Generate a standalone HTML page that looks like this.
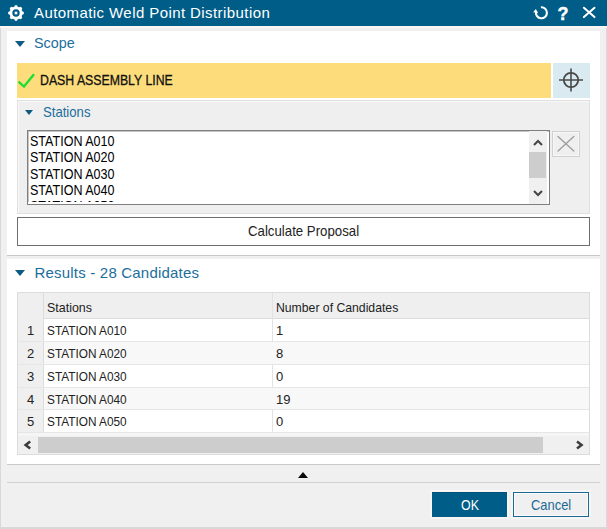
<!DOCTYPE html>
<html><head><meta charset="utf-8">
<style>
*{margin:0;padding:0;box-sizing:border-box}
html,body{width:607px;height:529px;overflow:hidden;background:#f0f0f0;font-family:"Liberation Sans",sans-serif;position:relative}
.a{position:absolute}
.t{position:absolute;white-space:nowrap;line-height:1;transform-origin:0 0}
.hdr{color:#1b6e9c}
.tri{width:0;height:0;border-left:6px solid transparent;border-right:6px solid transparent;border-top:6px solid #0e5a80}
.row{position:absolute;left:18px;width:571px;height:1px;background:#e6e6e6}
.idx{position:absolute;left:18px;width:25px;font-size:13px;color:#222;text-align:center;line-height:1}
.cell{position:absolute;left:47px;font-size:13px;color:#222;line-height:1;white-space:nowrap;transform:scaleX(0.909);transform-origin:0 0}
.num{position:absolute;left:276px;font-size:13px;color:#222;line-height:1;white-space:nowrap}
</style></head><body>
<div class="a" style="left:0;top:0;width:607px;height:26px;background:#005d88"></div>
<svg class="a" style="left:7px;top:3.8px" width="18" height="18" viewBox="0 0 18 18">
 <path fill="#fff" d="M7.32 2.72 L7.90 1.18 L10.10 1.18 L10.68 2.72 L12.25 3.37 L13.75 2.69 L15.31 4.25 L14.63 5.75 L15.28 7.32 L16.82 7.90 L16.82 10.10 L15.28 10.68 L14.63 12.25 L15.31 13.75 L13.75 15.31 L12.25 14.63 L10.68 15.28 L10.10 16.82 L7.90 16.82 L7.32 15.28 L5.75 14.63 L4.25 15.31 L2.69 13.75 L3.37 12.25 L2.72 10.68 L1.18 10.10 L1.18 7.90 L2.72 7.32 L3.37 5.75 L2.69 4.25 L4.25 2.69 L5.75 3.37 Z"/>
 <circle cx="9" cy="9" r="3.7" fill="#005d88"/>
 <rect x="7.7" y="7.7" width="2.6" height="2.6" fill="#fff"/>
</svg>
<div class="t" style="left:34px;top:5.0px;font-size:15px;color:#fff;letter-spacing:0.42px">Automatic Weld Point Distribution</div>
<!-- title icons -->
<svg class="a" style="left:528px;top:0" width="79" height="25" viewBox="0 0 79 25">
 <path d="M12.92 7.32 A5.5 5.5 0 1 1 8.1 11.4" fill="none" stroke="#fff" stroke-width="2.1"/>
 <path d="M5.2 12.3 L7.8 8.9 L10.2 12.9 Z" fill="#fff"/>
  <path d="M55.9 7.7 L66.5 17.1 M66.5 7.7 L55.9 17.1" stroke="#fff" stroke-width="2" stroke-linecap="round"/>
</svg>
<div class="t" style="left:557.5px;top:4.6px;font-size:18px;font-weight:bold;color:#fff;-webkit-text-stroke:0.4px #fff">?</div>

<div class="a" style="left:0;top:26px;width:1px;height:503px;background:#d8d8d8"></div>
<div class="a" style="left:606px;top:26px;width:1px;height:503px;background:#dadada"></div>
<div class="a" style="left:0;top:26px;width:607px;height:2px;background:#faf6f4"></div>

<!-- top panel -->
<div class="a" style="left:7px;top:31px;width:593px;height:224px;background:#fff"></div>
<div class="a" style="left:7px;top:255px;width:593px;height:1px;background:#c8c8c8"></div>
<div class="a tri" style="left:14.5px;top:41px;border-left-width:5.6px;border-right-width:5.6px"></div>
<div class="t hdr" style="left:34.4px;top:35.3px;font-size:15.5px;transform:scaleX(0.925)">Scope</div>

<div class="a" style="left:17px;top:63px;width:534px;height:35px;background:#fddc7b"></div>
<svg class="a" style="left:17px;top:72px" width="20" height="18" viewBox="0 0 20 18">
 <path d="M1.5 9.6 L7 14.6 L17 2.3" fill="none" stroke="#22dd33" stroke-width="2.4"/>
</svg>
<div class="t" style="left:39.6px;top:73.1px;font-size:14px;color:#111;transform:scaleX(0.878);-webkit-text-stroke:0.3px #111">DASH ASSEMBLY LINE</div>

<div class="a" style="left:553px;top:63px;width:37px;height:35px;background:#d9eaf0"></div>
<svg class="a" style="left:558px;top:67px" width="26" height="26" viewBox="0 0 26 26">
 <circle cx="13" cy="13" r="7.2" fill="none" stroke="#474747" stroke-width="1.8"/>
 <path d="M1 13 H25 M13 1.5 V24.5" stroke="#4a4a4a" stroke-width="1.6"/>
</svg>

<!-- stations panel -->
<div class="a" style="left:17px;top:100px;width:573px;height:114px;background:#efefef;border:1px solid #e0e0e0;box-shadow:inset 1px 1px 0 #f8f8f8"></div>
<div class="a tri" style="left:24.7px;top:110px;border-left-width:4.9px;border-right-width:4.9px;border-top-width:5px"></div>
<div class="t hdr" style="left:43px;top:104.5px;font-size:14.5px;transform:scaleX(0.906)">Stations</div>

<div class="a" style="left:27px;top:130px;width:523px;height:75px;background:#fff;border:1px solid #7f7f7f;box-shadow:inset 1px 1px 0 #c4c4c4;overflow:hidden">
 <div class="t" style="left:2.2px;top:1.7px;font-size:14px;color:#000;line-height:16.4px;transform:scaleX(0.895)">STATION A010<br>STATION A020<br>STATION A030<br>STATION A040<br>STATION A050</div>
 <div class="a" style="left:0;bottom:0;width:100%;height:1.6px;background:#fff"></div>
</div>
<!-- list scrollbar -->
<div class="a" style="left:529px;top:131px;width:18px;height:73px;background:#f0f0f0"></div>
<div class="a" style="left:529px;top:151.5px;width:17px;height:26px;background:#cdcdcd"></div>
<svg class="a" style="left:529px;top:131px" width="18" height="73" viewBox="0 0 18 73">
 <path d="M5 14 L9 10 L13 14" fill="none" stroke="#444" stroke-width="2"/>
 <path d="M5 60 L9 64 L13 60" fill="none" stroke="#444" stroke-width="2"/>
</svg>
<!-- delete button -->
<div class="a" style="left:552px;top:131px;width:28px;height:26px;background:#efefef;border:1px solid #d0d0d0;box-shadow:inset 0 0 0 1px #f8f8f8"></div>
<svg class="a" style="left:552px;top:131px" width="28" height="26" viewBox="0 0 28 26">
 <path d="M6 5.5 L21.8 20 M21.8 5.5 L6 20" stroke="#9c9c9c" stroke-width="1.3" stroke-linecap="round"/>
</svg>

<!-- calculate -->
<div class="a" style="left:17px;top:217px;width:573px;height:29px;background:#fff;border:1px solid #6e6e6e"></div>
<div class="t" style="left:247.8px;top:224.4px;font-size:14.4px;color:#222;transform:scaleX(0.92)">Calculate Proposal</div>

<!-- results panel -->
<div class="a" style="left:7px;top:259px;width:593px;height:205px;background:#fff"></div>
<div class="a" style="left:7px;top:464px;width:593px;height:1px;background:#c8c8c8"></div>
<div class="a tri" style="left:14.5px;top:270px;border-left-width:5.6px;border-right-width:5.6px"></div>
<div class="t hdr" style="left:34.5px;top:265.1px;font-size:15px;letter-spacing:0.2px">Results - 28 Candidates</div>

<!-- table -->
<div class="a" style="left:17px;top:292px;width:573px;height:163px;background:#fff;border:1px solid #dcdcdc"></div>
<div class="a" style="left:18px;top:293px;width:571px;height:25px;background:#efefef"></div>
<div class="a" style="left:18px;top:318px;width:571px;height:1px;background:#dcdcdc"></div>
<div class="a" style="left:18px;top:293px;width:25px;height:140px;background:#efefef"></div>
<div class="a" style="left:43px;top:293px;width:1px;height:140px;background:#dcdcdc"></div>
<div class="a" style="left:272px;top:293px;width:1px;height:140px;background:#e2e2e2"></div>
<div class="a" style="left:44px;top:342px;width:545px;height:22px;background:#f8f8f8"></div>
<div class="a" style="left:44px;top:388px;width:545px;height:21px;background:#f8f8f8"></div>
<div class="row" style="top:341px"></div>
<div class="row" style="top:364px"></div>
<div class="row" style="top:387px"></div>
<div class="row" style="top:409px"></div>
<div class="row" style="top:432px"></div>

<div class="t" style="left:47.4px;top:300.5px;font-size:13px;color:#222;transform:scaleX(0.957)">Stations</div>
<div class="t" style="left:276.3px;top:300.5px;font-size:13px;color:#222;transform:scaleX(0.94)">Number of Candidates</div>
<div class="idx" style="top:324.3px">1</div>
<div class="idx" style="top:347.0px">2</div>
<div class="idx" style="top:369.8px">3</div>
<div class="idx" style="top:392.5px">4</div>
<div class="idx" style="top:415.3px">5</div>
<div class="cell" style="top:324.3px">STATION A010</div>
<div class="cell" style="top:347.0px">STATION A020</div>
<div class="cell" style="top:369.8px">STATION A030</div>
<div class="cell" style="top:392.5px">STATION A040</div>
<div class="cell" style="top:415.3px">STATION A050</div>
<div class="num" style="top:324.3px">1</div>
<div class="num" style="top:347.0px">8</div>
<div class="num" style="top:369.8px">0</div>
<div class="num" style="top:392.5px">19</div>
<div class="num" style="top:415.3px">0</div>
<!-- h scrollbar -->
<div class="a" style="left:18px;top:433px;width:571px;height:21px;background:#f0f0f0;border-top:3px solid #f5f5f5"></div>
<div class="a" style="left:38px;top:437px;width:505px;height:16px;background:#cdcdcd"></div>
<svg class="a" style="left:18px;top:435px" width="571" height="19" viewBox="0 0 571 19">
 <path d="M12.2 6.4 L7.6 10 L12.2 13.6" fill="none" stroke="#3c3c3c" stroke-width="2.5" stroke-linejoin="miter"/>
 <path d="M559 6.4 L563.6 10 L559 13.6" fill="none" stroke="#3c3c3c" stroke-width="2.5"/>
</svg>

<!-- bottom -->
<div class="a" style="left:297.5px;top:472px;width:0;height:0;border-left:5.5px solid transparent;border-right:5.5px solid transparent;border-bottom:6px solid #0a0a0a"></div>
<div class="a" style="left:7px;top:482px;width:593px;height:1px;background:#d0d0d0"></div>
<div class="a" style="left:432px;top:492px;width:75px;height:25px;background:#005d88;border-top:1px solid #00507c;box-shadow:0 0 0 2px #f8f6f5"></div>
<div class="t" style="left:461px;top:497.5px;font-size:14.7px;color:#fff;transform:scaleX(0.845)">OK</div>
<div class="a" style="left:513px;top:492px;width:76px;height:25px;background:#f0f0f0;border:1px solid #1a6a96;box-shadow:inset 0 0 0 1px #fbfbfb,0 0 0 2px #f8f6f5"></div>
<div class="t" style="left:531px;top:498px;font-size:14.4px;color:#1b6a96;transform:scaleX(0.897)">Cancel</div>
<div class="a" style="left:0;top:527px;width:607px;height:2px;background:#d8d8d8"></div>
</body></html>
